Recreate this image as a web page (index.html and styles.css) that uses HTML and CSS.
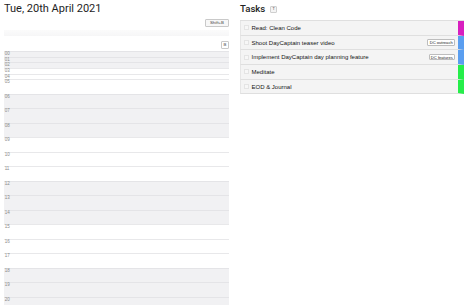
FILE: index.html
```html
<!DOCTYPE html>
<html>
<head>
<meta charset="utf-8">
<link rel="stylesheet" href="styles.css">
</head>
<body>
<div class="page">
  <section class="day">
    <h1 class="day-title">Tue, 20th April 2021</h1>
    <div class="toolbar"><span class="btn btn-shift">Shift+B</span></div>
    <div class="band"></div>
    <div class="toolbar toolbar-b"><span class="btn btn-b">B</span></div>
    <div class="grid">
      <div class="hour short shade"><span class="lbl">00</span></div>
      <div class="hour short shade"><span class="lbl">01</span></div>
      <div class="hour short shade"><span class="lbl">02</span></div>
      <div class="hour short"><span class="lbl">03</span></div>
      <div class="hour short"><span class="lbl">04</span></div>
      <div class="hour"><span class="lbl">05</span></div>
      <div class="hour shade"><span class="lbl">06</span></div>
      <div class="hour shade"><span class="lbl">07</span></div>
      <div class="hour shade"><span class="lbl">08</span></div>
      <div class="hour"><span class="lbl">09</span></div>
      <div class="hour"><span class="lbl">10</span></div>
      <div class="hour"><span class="lbl">11</span></div>
      <div class="hour shade"><span class="lbl">12</span></div>
      <div class="hour shade"><span class="lbl">13</span></div>
      <div class="hour shade"><span class="lbl">14</span></div>
      <div class="hour"><span class="lbl">15</span></div>
      <div class="hour"><span class="lbl">16</span></div>
      <div class="hour"><span class="lbl">17</span></div>
      <div class="hour shade"><span class="lbl">18</span></div>
      <div class="hour shade"><span class="lbl">19</span></div>
      <div class="hour shade last"><span class="lbl">20</span></div>
    </div>
  </section>
  <section class="tasks">
    <div class="tasks-head">
      <h2 class="tasks-title">Tasks</h2>
      <span class="btn btn-t">T</span>
    </div>
    <ul class="task-list">
      <li class="task c-magenta"><span class="check"></span><span class="name">Read: Clean Code</span></li>
      <li class="task c-blue"><span class="check"></span><span class="name">Shoot DayCaptain teaser video</span><span class="tag">DC outreach</span></li>
      <li class="task c-blue"><span class="check"></span><span class="name">Implement DayCaptain day planning feature</span><span class="tag">DC features</span></li>
      <li class="task c-green"><span class="check"></span><span class="name">Meditate</span></li>
      <li class="task c-green"><span class="check"></span><span class="name">EOD &amp; Journal</span></li>
    </ul>
  </section>
</div>
</body>
</html>
```

FILE: styles.css
```css
html, body {
  margin: 0;
  padding: 0;
  background: #ffffff;
  font-family: Roboto, "Liberation Sans", sans-serif;
  color: #222;
  overflow: hidden;
}

.page {
  display: flex;
  align-items: flex-start;
  gap: 11px;
  padding: 0 10px 0 4px;
}

/* ---------- Day column ---------- */
.day {
  width: 225px;
  flex: none;
}

.day-title {
  margin: 0;
  height: 17px;
  padding-top: 1px;
  font-size: 11px;
  line-height: 16px;
  font-weight: 400;
  color: #1e1e1e;
}

.toolbar {
  display: flex;
  justify-content: flex-end;
  height: 9px;
  padding-top: 1px;
}

.btn {
  display: inline-flex;
  align-items: center;
  justify-content: center;
  box-sizing: border-box;
  border: 1px solid #c9c9c9;
  border-radius: 1px;
  background: #f7f7f7;
  color: #444;
  font-family: "Liberation Sans", sans-serif;
  line-height: 1;
}

.btn-shift {
  width: 24px;
  height: 8px;
  font-size: 4.3px;
}

.band {
  height: 6px;
  margin-top: 2px;
  background: linear-gradient(#fbfbfb, #f6f6f7);
}

.toolbar-b {
  height: 10px;
  margin-top: 4px;
  padding-top: 1px;
}

.btn-b {
  width: 8px;
  height: 8px;
  font-size: 4.3px;
  background: #fff;
}

.hour {
  height: 14.5px;
  box-sizing: border-box;
  border-top: 1px solid #e8e8ea;
}

.hour.short {
  height: 5.7px;
}

.hour.shade {
  background: #f1f1f3;
  border-top-color: #e4e4e7;
}

.hour.last {
  height: 9px;
}

.lbl {
  display: block;
  padding-left: 0.7px;
  font-family: "Liberation Sans", sans-serif;
  font-size: 4.5px;
  line-height: 4.7px;
  color: #8a8a8a;
}

/* ---------- Tasks column ---------- */
.tasks {
  width: 224px;
  flex: none;
}

.tasks-head {
  display: flex;
  align-items: center;
  gap: 5px;
  height: 20px;
  padding-bottom: 2px;
  box-sizing: border-box;
}

.tasks-title {
  margin: 0;
  font-size: 9.6px;
  font-weight: 500;
  color: #222;
  line-height: 12px;
}

.btn-t {
  width: 7px;
  height: 7px;
  margin-top: 1px;
  font-size: 3.8px;
  border-color: #cfcfcf;
  background: #f4f4f4;
}

.task-list {
  list-style: none;
  margin: 0;
  padding: 0;
  border-top: 1px solid #dfdfdf;
}

.task {
  display: flex;
  align-items: center;
  height: 14.7px;
  box-sizing: border-box;
  border-bottom: 1px solid #dfdfdf;
  border-left: 1px solid #e6e6e6;
  background: #f4f4f4;
  padding-left: 3px;
  border-right: 6px solid #ccc;
}

.task.c-magenta { border-right-color: #d81fbf; }
.task.c-blue { border-right-color: #5a9ef0; }
.task.c-green { border-right-color: #25ee4a; }

.check {
  width: 3px;
  height: 3px;
  border: 0.5px solid #e4e4e4;
  background: #f7f7f7;
  margin-right: 2.5px;
  flex: none;
}

.name {
  flex: 1;
  font-family: "Liberation Sans", sans-serif;
  font-size: 6px;
  color: #151515;
  white-space: nowrap;
}

.tag {
  box-sizing: border-box;
  height: 6.5px;
  padding: 0 1.3px;
  margin-right: 3px;
  border: 0.5px solid #bdbdbd;
  border-radius: 1px;
  background: #fff;
  font-family: "Liberation Sans", sans-serif;
  font-size: 4.1px;
  line-height: 5.5px;
  color: #222;
}
```
